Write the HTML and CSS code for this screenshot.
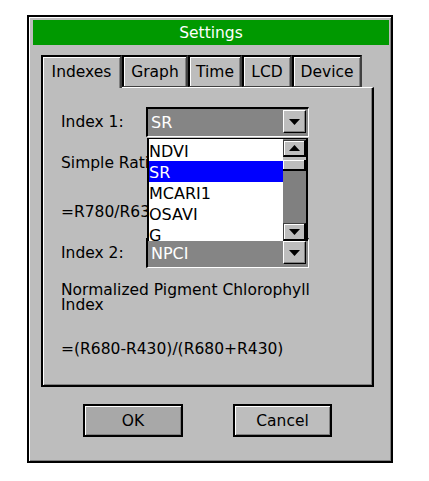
FILE: index.html
```html
<!DOCTYPE html>
<html lang="en">
<head>
<meta charset="utf-8">
<title>Settings</title>
<link rel="stylesheet" href="styles.css">
</head>
<body>
<div class="window">
  <div class="titlebar">Settings</div>
  <div class="tabs">
    <div class="tab tab-indexes active">Indexes</div>
    <div class="tab tab-graph">Graph</div>
    <div class="tab tab-time">Time</div>
    <div class="tab tab-lcd">LCD</div>
    <div class="tab tab-device">Device</div>
  </div>
  <div class="panel">
    <div class="row row-1">
      <span class="label">Index 1:</span>
      <div class="combo">
        <span class="combo-value">SR</span>
        <span class="combo-btn"><svg class="arrow" width="11" height="6" viewBox="0 0 11 6"><path d="M0 0H11L5.5 6Z"/></svg></span>
      </div>
    </div>
    <div class="text clipped desc-1">Simple Ratio</div>
    <div class="text clipped formula-1">=R780/R630</div>
    <div class="row row-2">
      <span class="label">Index 2:</span>
      <div class="combo">
        <span class="combo-value">NPCI</span>
        <span class="combo-btn"><svg class="arrow" width="11" height="6" viewBox="0 0 11 6"><path d="M0 0H11L5.5 6Z"/></svg></span>
      </div>
    </div>
    <div class="text desc-2">Normalized Pigment Chlorophyll Index</div>
    <div class="text formula-2">=(R680-R430)/(R680+R430)</div>

    <div class="dropdown">
      <ul class="options">
        <li>NDVI</li>
        <li class="selected">SR</li>
        <li>MCARI1</li>
        <li>OSAVI</li>
        <li>G</li>
      </ul>
      <div class="scrollbar">
        <div class="sb-btn sb-up"><svg class="arrow" width="11" height="6" viewBox="0 0 11 6"><path d="M0 6H11L5.5 0Z"/></svg></div>
        <div class="sb-gap"></div>
        <div class="sb-thumb"></div>
        <div class="sb-track"></div>
        <div class="sb-btn sb-down"><svg class="arrow" width="11" height="6" viewBox="0 0 11 6"><path d="M0 0H11L5.5 6Z"/></svg></div>
      </div>
    </div>
  </div>
  <div class="buttons">
    <button class="btn btn-ok">OK</button>
    <button class="btn btn-cancel">Cancel</button>
  </div>
</div>
</body>
</html>
```
FILE: styles.css
```css
body {
  margin: 0;
  background: #fff;
  font-family: "DejaVu Sans", sans-serif;
  font-size: 15.5px;
  color: #000;
}

.window {
  box-sizing: border-box;
  width: 366px;
  height: 448px;
  margin: 15px 0 0 27px;
  border: 2px solid #000;
  background: #bdbdbd;
  box-shadow: inset 1px 1px 0 #fff, inset -1px -1px 0 #808080;
  padding: 3px 2px 0 4px;
  display: flex;
  flex-direction: column;
}

.titlebar {
  height: 23px;
  padding-top: 2px;
  line-height: 23px;
  background: #009900;
  color: #fff;
  text-align: center;
}

.tabs {
  display: flex;
  height: 32px;
  margin: 10px 0 0 8px;
  position: relative;
  z-index: 1;
}

.tab {
  box-sizing: border-box;
  height: 32px;
  border: 2px solid #000;
  border-right-color: #404040;
  border-bottom: 1px solid #404040;
  box-shadow: inset 1px 1px 0 #fff, inset -1px 0 0 #808080;
  display: flex;
  align-items: center;
  justify-content: center;
  line-height: 18px;
}

.tab.active {
  height: 33px;
  border-bottom: none;
  padding-bottom: 2px;
  background: #bdbdbd;
}

.tab-indexes { width: 81px; }
.tab-graph { width: 66px; }
.tab-time { width: 54px; }
.tab-lcd { width: 50px; }
.tab-device { width: 70px; }

.panel {
  box-sizing: border-box;
  width: 333px;
  height: 300px;
  margin-left: 8px;
  position: relative;
  border: 2px solid #000;
  border-top: 1px solid #fff;
  box-shadow: inset 1px 0 0 #fff, inset -1px -1px 0 #808080;
  padding-left: 18px;
}

.row {
  display: flex;
  align-items: center;
  height: 30px;
}

.row-1 { margin-top: 19px; }
.row-2 { margin-top: 17px; }

.label {
  width: 85px;
  line-height: 18px;
}

.text {
  line-height: 18px;
  white-space: nowrap;
}

.clipped {
  width: 86px;
  overflow: hidden;
}

.desc-1 { margin-top: 17px; }
.formula-1 { margin-top: 31px; }

.desc-2 {
  margin-top: 15px;
  line-height: 15px;
  width: 260px;
  white-space: normal;
}

.formula-2 { margin-top: 27px; }

.combo {
  box-sizing: border-box;
  width: 163px;
  height: 30px;
  display: flex;
  border-top: 2px solid #000;
  border-left: 2px solid #000;
  border-right: 1px solid #fff;
  border-bottom: 1px solid #fff;
  background: #858585;
}

.combo-value {
  flex: 1;
  color: #fff;
  font-size: 16px;
  line-height: 27px;
  padding-left: 3px;
}

.combo-btn {
  box-sizing: border-box;
  width: 23px;
  height: 23px;
  margin: 1px 2px 0 0;
  background: #bdbdbd;
  border: 1px solid;
  border-color: #fff #000 #000 #fff;
  box-shadow: inset -1px -1px 0 #808080;
  display: flex;
  align-items: center;
  justify-content: center;
}

.arrow {
  display: block;
  fill: #000;
}

.dropdown {
  position: absolute;
  left: 104px;
  top: 50px;
  z-index: 2;
  box-sizing: border-box;
  width: 161px;
  height: 103px;
  border-top: 1px solid #000;
  border-left: 2px solid #000;
  background: #fff;
  display: flex;
}

.options {
  flex: 1;
  list-style: none;
  margin: 0;
  padding: 1px 0 0;
  overflow: hidden;
  font-size: 16px;
}

.options li {
  box-sizing: border-box;
  height: 21px;
  padding-top: 2px;
  line-height: 19px;
}

.options li.selected {
  background: #0000ff;
  color: #fff;
}

.scrollbar {
  box-sizing: border-box;
  width: 25px;
  display: flex;
  flex-direction: column;
  background: #808080;
  border-right: 2px solid #000;
}

.sb-btn {
  box-sizing: border-box;
  background: #bdbdbd;
  border: 1px solid #404040;
  border-right: 2px solid #000;
  border-bottom: 2px solid #000;
  box-shadow: inset 1px 1px 0 #fff;
  display: flex;
  align-items: center;
  justify-content: center;
}

.sb-up {
  height: 17px;
  margin-top: 1px;
}

.sb-gap {
  height: 3px;
  background: #bdbdbd;
}

.sb-thumb {
  box-sizing: border-box;
  height: 11px;
  background: #bdbdbd;
  border-right: 2px solid #000;
  border-bottom: 2px solid #000;
  box-shadow: inset 1px 1px 0 #fff;
}

.sb-track { flex: 1; }

.sb-down { height: 18px; }

.buttons {
  display: flex;
  gap: 50px;
  margin: 17px 0 0 50px;
}

.btn {
  box-sizing: border-box;
  width: 100px;
  height: 33px;
  padding: 0;
  border: 2px solid #000;
  box-shadow: inset 1px 1px 0 #fff, inset -1px -1px 0 #808080;
  background: #bdbdbd;
  font: inherit;
  color: #000;
}

.btn-ok { background: #a8a8a8; }
.btn-cancel { width: 99px; }
```
